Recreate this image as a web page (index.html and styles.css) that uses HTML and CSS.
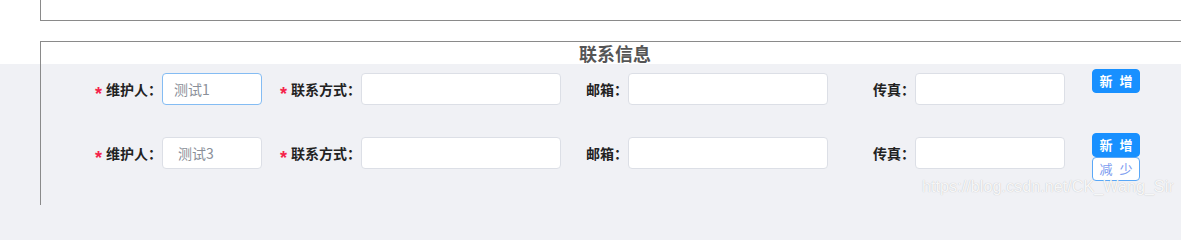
FILE: index.html
```html
<!DOCTYPE html>
<html lang="zh-CN">
<head>
<meta charset="utf-8">
<title>联系信息</title>
<link rel="stylesheet" href="styles.css">
</head>
<body>
<div class="page">
  <div class="top-box"></div>
  <section class="card">
    <div class="card-title">联系信息</div>
    <div class="form">
      <div class="row">
        <div class="field">
          <label class="label label-w1"><span class="req">*</span>维护人：</label>
          <div class="input input-short input-focus"><span class="val">测试1</span></div>
        </div>
        <div class="field">
          <label class="label label-w2"><span class="req">*</span>联系方式：</label>
          <div class="input input-long"></div>
        </div>
        <div class="field">
          <label class="label label-w3">邮箱：</label>
          <div class="input input-long"></div>
        </div>
        <div class="field">
          <label class="label label-w4">传真：</label>
          <div class="input input-mid"></div>
        </div>
        <div class="actions">
          <button class="btn btn-primary">新 增</button>
        </div>
      </div>
      <div class="row">
        <div class="field">
          <label class="label label-w1"><span class="req">*</span>维护人：</label>
          <div class="input input-short input-indent"><span class="val">测试3</span></div>
        </div>
        <div class="field">
          <label class="label label-w2"><span class="req">*</span>联系方式：</label>
          <div class="input input-long"></div>
        </div>
        <div class="field">
          <label class="label label-w3">邮箱：</label>
          <div class="input input-long"></div>
        </div>
        <div class="field">
          <label class="label label-w4">传真：</label>
          <div class="input input-mid"></div>
        </div>
        <div class="actions">
          <button class="btn btn-primary">新 增</button>
          <button class="btn btn-plain">减 少</button>
        </div>
      </div>
    </div>
  </section>
  <div class="watermark">https://blog.csdn.net/CK_Wang_Sir</div>
</div>
</body>
</html>
```
FILE: styles.css
```css
html, body {
  margin: 0;
  padding: 0;
}
html {
  background: #f0f1f5;
}
body {
  width: 1181px;
  height: 205px;
  overflow: hidden;
  font-family: "Noto Sans CJK SC", "Noto Sans", sans-serif;
}
.page {
  position: relative;
  height: 205px;
  overflow: hidden;
  background: linear-gradient(to bottom, #ffffff 0, #ffffff 64px, #f0f1f5 64px);
}
.top-box {
  margin-left: 40px;
  width: 1150px;
  height: 20px;
  border: 1px solid #8a8a8a;
  border-top: none;
}
.card {
  margin-top: 20px;
  margin-left: 40px;
  width: 1150px;
  height: 164px;
  border: 1px solid #8a8a8a;
  border-bottom: none;
  box-sizing: border-box;
}
.card-title {
  height: 22px;
  line-height: 22px;
  text-align: center;
  font-size: 18px;
  font-weight: bold;
  color: #555555;
}
.form {
  padding-top: 9px;
  display: flex;
  flex-direction: column;
  gap: 32px;
}
.row {
  display: flex;
  align-items: flex-start;
}
.field {
  display: flex;
  align-items: center;
}
.label {
  box-sizing: border-box;
  text-align: right;
  font-size: 14px;
  font-weight: bold;
  color: #222222;
  line-height: 32px;
  white-space: nowrap;
}
.label-w1 { width: 121px; }
.label-w2 { width: 99px; }
.label-w3 { width: 67px; }
.label-w4 { width: 87px; }
.req {
  display: inline-block;
  font-family: "Liberation Sans", Arial, sans-serif;
  font-size: 18px;
  font-weight: bold;
  color: #f5234a;
  margin-right: 4px;
  vertical-align: -5px;
  line-height: 14px;
}
.input {
  box-sizing: border-box;
  height: 32px;
  background: #ffffff;
  border: 1px solid #dcdfe6;
  border-radius: 4px;
  display: flex;
  align-items: center;
  padding-left: 11px;
  font-size: 14px;
  color: #8a8f99;
}
.input-short { width: 100px; }
.input-long { width: 200px; }
.input-mid { width: 150px; }
.input-focus { border-color: #84bcf3; }
.input-indent { padding-left: 15px; }
.actions {
  margin-left: 27px;
  margin-top: -4px;
  display: flex;
  flex-direction: column;
}
.btn {
  box-sizing: border-box;
  width: 48px;
  height: 24px;
  padding: 0;
  border-radius: 4px;
  font-family: "Noto Sans CJK SC", "Noto Sans", sans-serif;
  font-size: 13px;
  line-height: 22px;
  word-spacing: 4px;
  cursor: pointer;
}
.btn-primary {
  background: #1890ff;
  border: 1px solid #1890ff;
  color: #ffffff;
  font-weight: bold;
}
.btn-plain {
  background: #ffffff;
  border: 1px solid #5aa8f7;
  color: #7b9cf0;
}
.watermark {
  position: absolute;
  left: 922px;
  top: 177px;
  font-family: "Liberation Sans", Arial, sans-serif;
  font-size: 16px;
  line-height: 20px;
  color: rgba(255, 255, 255, 0.9);
  text-shadow: 0 0 1px rgba(0, 0, 0, 0.25);
  letter-spacing: 0.1px;
}
```
